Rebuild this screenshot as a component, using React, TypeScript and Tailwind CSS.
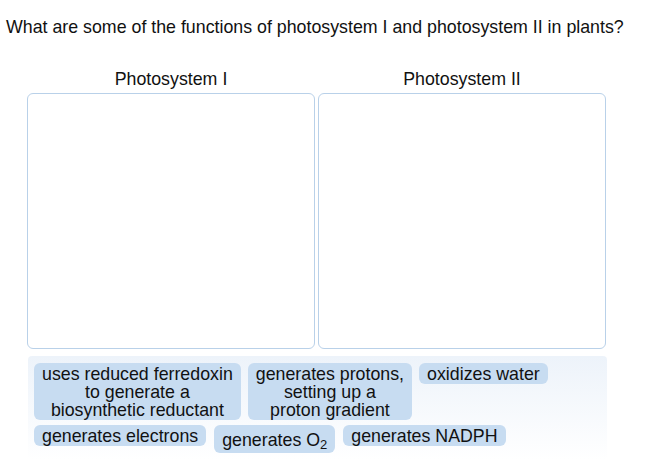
const chipsRow1 = [
  ["uses reduced ferredoxin", "to generate a", "biosynthetic reductant"],
  ["generates protons,", "setting up a", "proton gradient"],
  ["oxidizes water"],
];

function Chip({ children }: { children: React.ReactNode }) {
  return (
    <div className="bg-[#c7dcf1] rounded-[6px] px-[8px] py-[1.5px] text-center leading-[18px] text-[17.8px] text-[#111]">
      {children}
    </div>
  );
}

export default function App() {
  return (
    <div
      className="w-[645px] h-[475px] bg-white text-[#111]"
      style={{ fontFamily: '"Liberation Sans", Arial, sans-serif' }}
    >
      <p className="pt-[17px] pl-[6px] text-[17.8px] leading-[20px]">
        What are some of the functions of photosystem I and photosystem II in plants?
      </p>

      <div className="ml-[27px] mt-[32px] w-[579px] grid grid-cols-2 gap-x-[3px]">
        <div className="text-center text-[17.8px] leading-[20px]">Photosystem I</div>
        <div className="text-center text-[17.8px] leading-[20px]">Photosystem II</div>
        <div className="mt-[4px] h-[256px] rounded-[6px] border border-[#b9d1e9] bg-white" />
        <div className="mt-[4px] h-[256px] rounded-[6px] border border-[#b9d1e9] bg-white" />
      </div>

      <div className="ml-[28px] mt-[7px] w-[579px] h-[104px] rounded-[4px] bg-gradient-to-b from-[#edf3fa] to-white px-[6px] pt-[7px] flex flex-col gap-[5px]">
        <div className="flex items-start gap-x-[7px]">
          {chipsRow1.map((lines, i) => (
            <Chip key={i}>
              {lines.map((l, j) => (
                <div key={j}>{l}</div>
              ))}
            </Chip>
          ))}
        </div>
        <div className="flex items-start gap-x-[8px]">
          <Chip>generates electrons</Chip>
          <Chip>
            <div className="pt-[4px] pb-[3px]">
              generates O<sub className="text-[13px] bottom-[-3px]">2</sub>
            </div>
          </Chip>
          <Chip>generates NADPH</Chip>
        </div>
      </div>
    </div>
  );
}
